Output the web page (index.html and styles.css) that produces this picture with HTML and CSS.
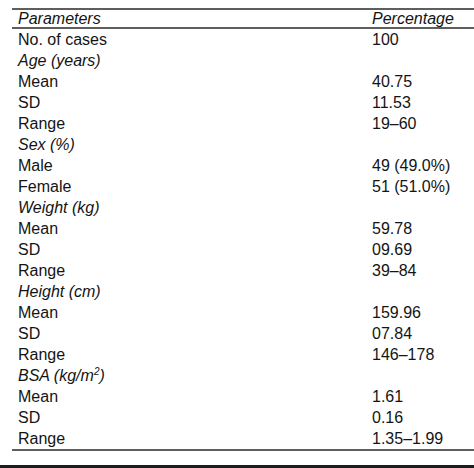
FILE: index.html
```html
<!DOCTYPE html>
<html>
<head>
<meta charset="utf-8">
<link rel="stylesheet" href="styles.css">
</head>
<body>
<div class="page">
<table class="stats">
  <thead>
    <tr><th class="c1">Parameters</th><th class="c2">Percentage</th></tr>
  </thead>
  <tbody>
    <tr><td class="c1">No. of cases</td><td class="c2">100</td></tr>
    <tr class="cat"><td class="c1">Age (years)</td><td class="c2"></td></tr>
    <tr><td class="c1">Mean</td><td class="c2">40.75</td></tr>
    <tr><td class="c1">SD</td><td class="c2">11.53</td></tr>
    <tr><td class="c1">Range</td><td class="c2">19–60</td></tr>
    <tr class="cat"><td class="c1">Sex (%)</td><td class="c2"></td></tr>
    <tr><td class="c1">Male</td><td class="c2">49 (49.0%)</td></tr>
    <tr><td class="c1">Female</td><td class="c2">51 (51.0%)</td></tr>
    <tr class="cat"><td class="c1">Weight (kg)</td><td class="c2"></td></tr>
    <tr><td class="c1">Mean</td><td class="c2">59.78</td></tr>
    <tr><td class="c1">SD</td><td class="c2">09.69</td></tr>
    <tr><td class="c1">Range</td><td class="c2">39–84</td></tr>
    <tr class="cat"><td class="c1">Height (cm)</td><td class="c2"></td></tr>
    <tr><td class="c1">Mean</td><td class="c2">159.96</td></tr>
    <tr><td class="c1">SD</td><td class="c2">07.84</td></tr>
    <tr><td class="c1">Range</td><td class="c2">146–178</td></tr>
    <tr class="cat"><td class="c1">BSA (kg/m<sup>2</sup>)</td><td class="c2"></td></tr>
    <tr><td class="c1">Mean</td><td class="c2">1.61</td></tr>
    <tr><td class="c1">SD</td><td class="c2">0.16</td></tr>
    <tr class="last"><td class="c1">Range</td><td class="c2">1.35–1.99</td></tr>
  </tbody>
</table>
<div class="band"></div>
</div>
</body>
</html>
```

FILE: styles.css
```css
html, body {
  margin: 0;
  padding: 0;
  background: #ffffff;
}

.page {
  padding-top: 8px;
  height: 468px;
  overflow: hidden;
  box-sizing: border-box;
  font-family: "Liberation Sans", Arial, sans-serif;
  font-size: 16px;
  color: #141414;
}

.stats {
  margin-left: 12px;
  width: 462px;
  border-collapse: separate;
  border-spacing: 0;
  table-layout: fixed;
}

.stats th,
.stats td {
  padding: 0;
  text-align: left;
  white-space: nowrap;
}

.stats th {
  font-weight: normal;
  font-style: italic;
  line-height: 17px;
  border-top: 2px solid #5e5e5e;
  border-bottom: 2px solid #5e5e5e;
}

.stats td {
  line-height: 21px;
  height: 21px;
}

.stats .c1 {
  width: 360px;
  padding-left: 6px;
  box-sizing: border-box;
}

.stats .cat .c1 {
  font-style: italic;
}

.stats .last td {
  border-bottom: 2px solid #5e5e5e;
}

.stats sup {
  font-size: 10px;
  line-height: 0;
  vertical-align: 6px;
}

.band {
  margin-top: 14px;
  height: 5px;
  background: #1c1c1c;
}
```
